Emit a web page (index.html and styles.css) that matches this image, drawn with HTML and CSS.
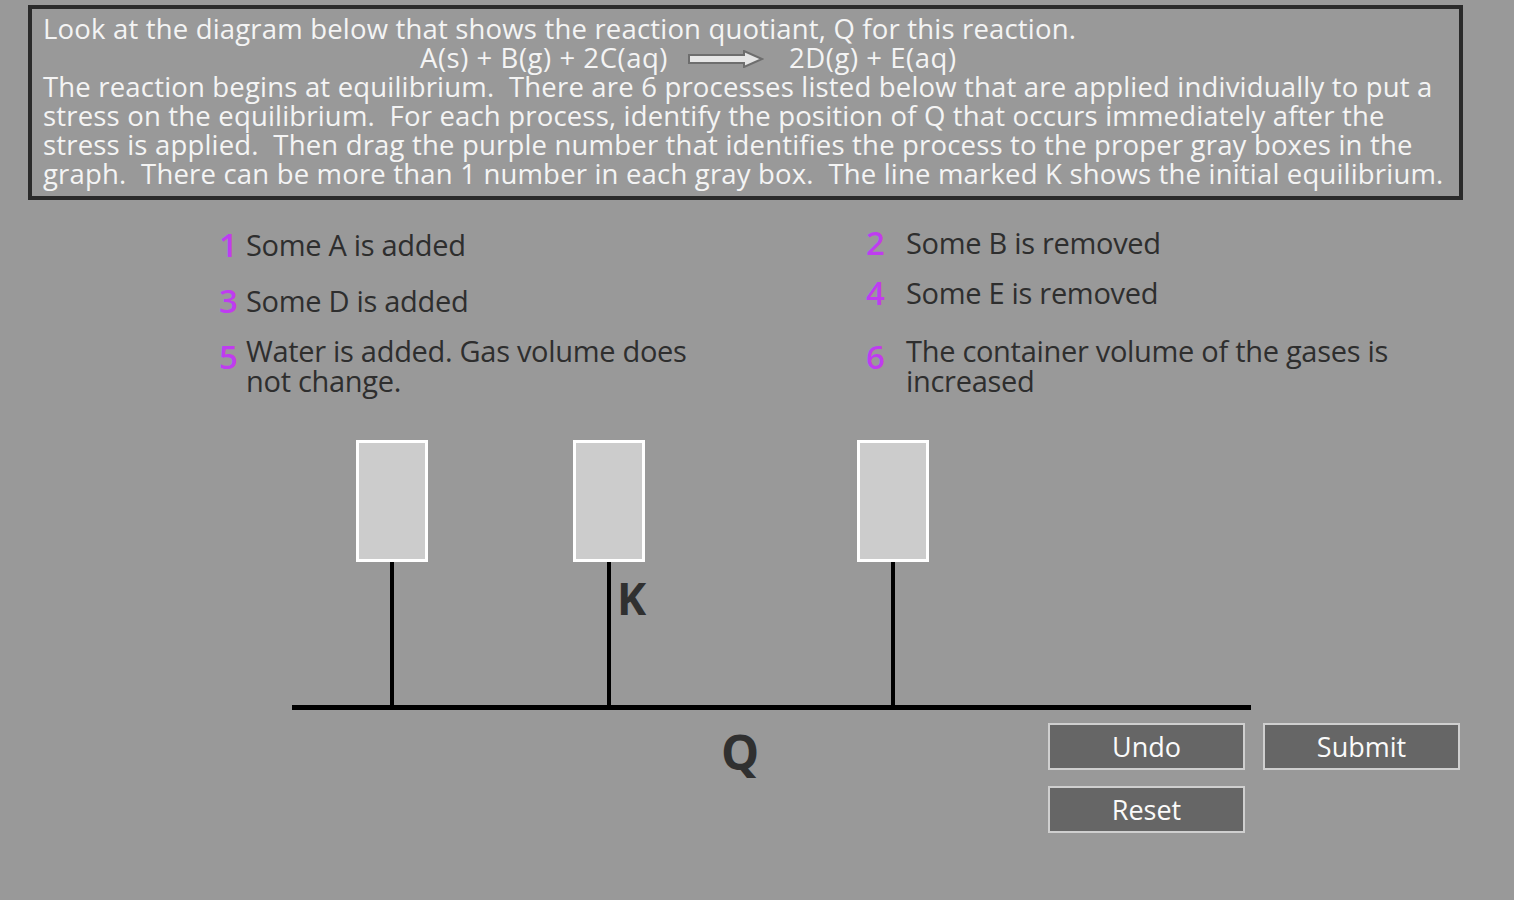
FILE: index.html
```html
<!DOCTYPE html>
<html lang="en">
<head>
    <meta charset="UTF-8">
    <meta name="viewport" content="width=device-width, initial-scale=1.0">
    <title>Reaction Quotient Q</title>
    <link rel="stylesheet" href="styles.css">
</head>
<body>

    <div class="prompt">
        <p>Look at the diagram below that shows the reaction quotiant, Q for this reaction.</p>
        <p class="equation">
            <span>A(s) + B(g) + 2C(aq)</span>
            <svg class="arrow" width="76" height="18" viewBox="0 0 76 18">
                <path d="M1 5 H56 V1 L74 9 L56 17 V13 H1 Z" fill="#e6e6e6" stroke="#6e6e6e" stroke-width="2" stroke-linejoin="miter"/>
            </svg>
            <span>2D(g) + E(aq)</span>
        </p>
        <p>The reaction begins at equilibrium.&nbsp; There are 6 processes listed below that are applied individually to put a stress on the equilibrium.&nbsp; For each process, identify the position of Q that occurs immediately after the stress is applied.&nbsp; Then drag the purple number that identifies the process to the proper gray boxes in the graph.&nbsp; There can be more than 1 number in each gray box.&nbsp; The line marked K shows the initial equilibrium.</p>
    </div>

    <div class="processes">
        <div class="process p1"><span class="num">1</span><span class="text">Some A is added</span></div>
        <div class="process p2"><span class="num">2</span><span class="text">Some B is removed</span></div>
        <div class="process p3"><span class="num">3</span><span class="text">Some D is added</span></div>
        <div class="process p4"><span class="num">4</span><span class="text">Some E is removed</span></div>
        <div class="process p5"><span class="num">5</span><span class="text">Water is added. Gas volume does not change.</span></div>
        <div class="process p6"><span class="num">6</span><span class="text">The container volume of the gases is increased</span></div>
    </div>

    <div class="board">
        <div class="graph">
            <div class="axis"></div>
            <div class="marker m-low"><div class="drop"></div><div class="stem"></div></div>
            <div class="marker m-k"><div class="drop"></div><div class="stem"></div><span class="k-label">K</span></div>
            <div class="marker m-high"><div class="drop"></div><div class="stem"></div></div>
            <span class="q-label">Q</span>
        </div>
        <div class="controls">
            <button>Undo</button>
            <button>Submit</button>
            <button>Reset</button>
        </div>
    </div>

</body>
</html>
```

FILE: styles.css
```css
* {
    margin: 0;
    padding: 0;
    box-sizing: border-box;
}
body {
    background: #999999;
    font-family: 'Open Sans', sans-serif;
    width: 1514px;
    height: 900px;
    overflow: hidden;
}
.prompt {
    margin: 5px 0 0 28px;
    width: 1435px;
    border: 4px solid #2a2a2a;
    padding: 5px 10px 8px 11px;
    color: #f4f4f4;
    font-size: 27.5px;
    line-height: 29px;
    letter-spacing: 0.18px;
}
.equation {
    display: flex;
    align-items: center;
    padding-left: 377px;
    height: 29px;
    letter-spacing: 0.55px;
}
.arrow {
    margin: 2px 25px 0 20px;
}
.processes {
    display: grid;
    grid-template-columns: 647px 600px;
    margin: 30px 0 0 219px;
    color: #2e2e2e;
    font-size: 29px;
    line-height: 30px;
    letter-spacing: -0.3px;
}
.process {
    display: flex;
    align-items: flex-start;
}
.num {
    color: #bf3cf0;
    font-size: 33px;
    font-weight: 600;
    width: 27px;
    flex-shrink: 0;
}
.p2 .num, .p4 .num, .p6 .num {
    width: 40px;
}
.p2 { margin-top: -2px; }
.p4 { margin-top: -8px; }
.p1, .p2 {
    height: 56px;
}
.p3, .p4 {
    height: 50px;
}
.p5 .text {
    width: 460px;
}
.p6 .text {
    width: 530px;
}
.p5 .num, .p6 .num {
    padding-top: 6px;
}
.board {
    display: flex;
    margin-top: 44px;
    padding-left: 292px;
}
.graph {
    position: relative;
    width: 756px;
    height: 400px;
}
.axis {
    position: absolute;
    left: 0;
    top: 265px;
    width: 959px;
    height: 5px;
    background: #000;
}
.marker {
    position: absolute;
    top: 0;
    width: 72px;
    display: flex;
    flex-direction: column;
    align-items: center;
}
.m-low { left: 64px; }
.m-k { left: 281px; }
.m-high { left: 565px; }
.drop {
    width: 72px;
    height: 122px;
    background: #cccccc;
    border: 3px solid #ffffff;
}
.stem {
    width: 4px;
    height: 145px;
    background: #000;
}
.k-label {
    position: absolute;
    left: 44px;
    top: 133px;
    font-size: 44px;
    font-weight: bold;
    color: #303030;
    line-height: 50px;
}
.q-label {
    position: absolute;
    left: 429px;
    top: 284px;
    font-size: 48px;
    font-weight: bold;
    color: #303030;
    line-height: 56px;
}
.controls {
    display: grid;
    grid-template-columns: 197px 197px;
    column-gap: 18px;
    row-gap: 16px;
    align-self: flex-start;
    margin-top: 283px;
}
button {
    height: 47px;
    background: #666666;
    border: 2px solid #cfcfcf;
    color: #fafafa;
    font-family: 'Open Sans', sans-serif;
    font-size: 27px;
    line-height: 40px;
    cursor: pointer;
}
```
